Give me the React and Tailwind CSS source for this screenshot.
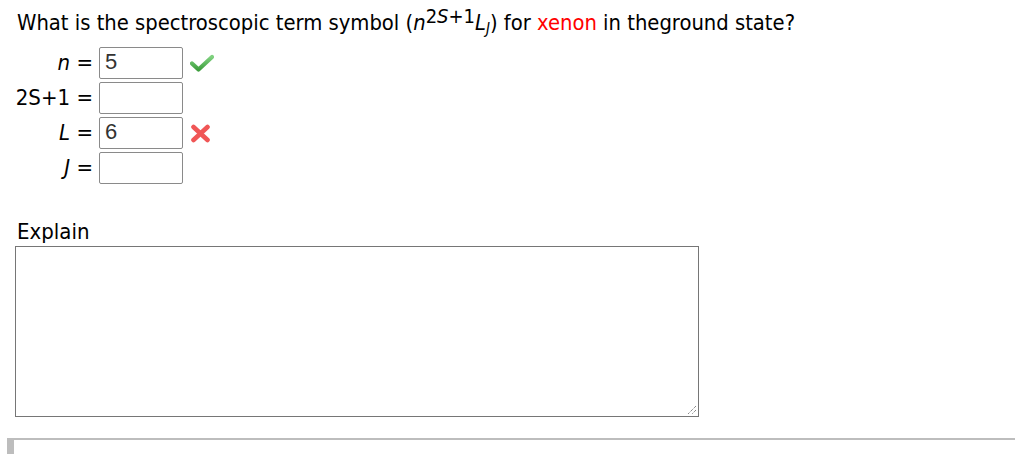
import React from "react";

const Check = () => (
  <svg width="24" height="18" viewBox="0 0 24 18" className="ml-[7px]">
    <defs>
      <linearGradient id="g" x1="0" y1="0" x2="0" y2="1">
        <stop offset="0" stopColor="#7fd17f" />
        <stop offset="1" stopColor="#3f9f3f" />
      </linearGradient>
    </defs>
    <path d="M2 9.5 L8.5 15.5 L22 3" fill="none" stroke="url(#g)" strokeWidth="4.2" strokeLinecap="round" strokeLinejoin="round" />
  </svg>
);

const Cross = () => (
  <svg width="21" height="19" viewBox="0 0 21 19" className="ml-[7px]">
    <path d="M3.5 3 L17.5 16 M17.5 3 L3.5 16" fill="none" stroke="#f05656" strokeWidth="4.6" strokeLinecap="round" />
  </svg>
);

function Row({ label, value, icon }) {
  return (
    <div className="flex items-center h-[32px]">
      <div className="w-[90px] text-right pr-[6px] text-[22px] leading-none whitespace-nowrap">{label}</div>
      <div className="w-[84px] h-[32px] border border-[#8a8a8a] rounded-[2px] flex items-center pl-[5px] pb-[3px] text-[22px] text-[#333] font-['Liberation_Sans',Arial,sans-serif] [font-stretch:normal]">
        {value}
      </div>
      {icon}
    </div>
  );
}

export default function App() {
  return (
    <div className="w-[1015px] h-[454px] bg-white text-black font-['DejaVu_Sans_Condensed','DejaVu_Sans',Verdana,sans-serif] [font-stretch:condensed] overflow-hidden flex flex-col">
      <div className="pl-[17px] pt-[10px] text-[21.8px] leading-[26px] whitespace-nowrap">
        What is the spectroscopic term symbol (<i>n</i>
        <span className="text-[20px] relative -top-[7px]">2<i>S</i>+1</span>
        <i>L</i>
        <span className="text-[15px] relative top-[4px]"><i>J</i></span>) for{" "}
        <span className="text-[#ff0000]">xenon</span> in theground state?
      </div>
      <div className="flex flex-col gap-[3px] mt-[9px] pl-[9px]">
        <Row label={<><i>n</i> =</>} value="5" icon={<Check />} />
        <Row label="2S+1 =" value="" />
        <Row label={<><i>L</i> =</>} value="6" icon={<Cross />} />
        <Row label={<><i>J</i> =</>} value="" />
      </div>
      <div className="pl-[17px] mt-[35px] text-[22px] leading-[26px]">Explain</div>
      <div className="ml-[15px] mt-[1px] w-[684px] h-[171px] border border-[#767676] relative">
        <svg width="12" height="12" viewBox="0 0 12 12" className="absolute right-[1px] bottom-[1px]">
          <path d="M11 3 L3 11 M11 7 L7 11" stroke="#555" strokeWidth="1" strokeDasharray="1 1" />
        </svg>
      </div>
      <div className="mt-[21px] ml-[7px] flex-1 flex flex-col">
        <div className="h-[2px] bg-[#bdbdbd]" />
        <div className="w-[7px] flex-1 bg-[#bdbdbd]" />
      </div>
    </div>
  );
}
